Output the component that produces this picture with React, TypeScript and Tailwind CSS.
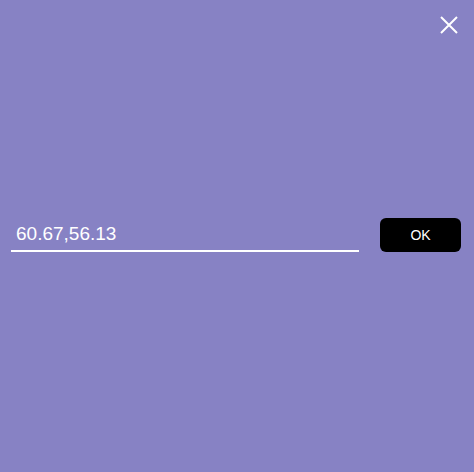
import React from "react";

export default function App() {
  return (
    <div
      className="relative flex h-[472px] w-full items-center bg-[#8782c4] pb-[2px] pl-[11px] pr-[13px]"
      style={{ fontFamily: '"Liberation Sans", Arial, sans-serif' }}
    >
      <button className="absolute right-[16px] top-[16px] flex h-[18px] w-[18px] items-center justify-center">
        <svg width="18" height="18" viewBox="0 0 18 18" fill="none">
          <path d="M1 1L17 17M17 1L1 17" stroke="white" strokeWidth="2" />
        </svg>
      </button>
      <div className="flex w-full items-center justify-between">
        <input
          defaultValue="60.67,56.13"
          className="h-[34px] w-[348px] border-b-2 border-white bg-transparent pl-[5px] text-[19px] text-white outline-none"
          style={{ fontFamily: '"Liberation Sans", Arial, sans-serif' }}
        />
        <button className="h-[34px] w-[81px] rounded-[6px] bg-black text-[14px] text-white">
          OK
        </button>
      </div>
    </div>
  );
}
